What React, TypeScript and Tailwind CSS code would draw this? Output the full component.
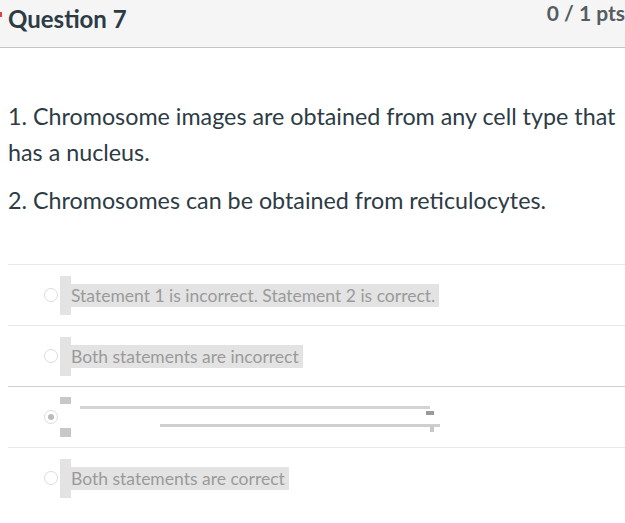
import React from 'react';

const ANSWERS = [
  { label: 'Statement 1 is incorrect. Statement 2 is correct.', hidden: false },
  { label: 'Both statements are incorrect', hidden: false },
  { label: '', hidden: true },
  { label: 'Both statements are correct', hidden: false },
];

function Radio({ checked }: { checked?: boolean }) {
  return (
    <span className="w-[14px] h-[14px] rounded-full border border-[#dcdcdc] bg-white shrink-0 flex items-center justify-center">
      {checked && <span className="w-[6px] h-[6px] rounded-full bg-[#bbbbbb]" />}
    </span>
  );
}

function HiddenRow() {
  // answer text scrubbed out in the screenshot
  return (
    <div className="flex items-center h-[60px] pl-[36px]">
      <Radio checked />
      <div className="relative ml-[2px] w-[374px] h-[40px]">
        <div className="absolute left-0 top-0 w-[11px] h-[7px] bg-[#c8c8c8]" />
        <div className="absolute left-0 bottom-0 w-[11px] h-[9px] bg-[#c8c8c8]" />
        <div className="absolute left-[20px] top-[9px] w-[350px] h-[3px] bg-[#d4d4d4]" />
        <div className="absolute left-[100px] top-[27px] w-[280px] h-[3px] bg-[#cfcfcf]" />
        <div className="absolute right-0 top-[14px] w-[8px] h-[4px] bg-[#9a9a9a]" />
        <div className="absolute right-0 bottom-[5px] w-[4px] h-[6px] bg-[#c8c8c8]" />
      </div>
    </div>
  );
}

export default function App() {
  return (
    <div
      className="w-[625px] h-[523px] bg-white overflow-hidden text-[#2d3b45]"
      style={{ fontFamily: 'Lato, "Noto Sans", sans-serif' }}
    >
      {/* Header */}
      <div className="relative flex justify-between items-start h-[48px] bg-[#f5f5f5] border-b border-[#c4c4c4]">
        <span className="absolute left-0 top-[12px] w-[2px] h-[5px] bg-[#e0413a]" />
        <h2 className="pl-[8px] pt-[4px] text-[24px] font-bold leading-[30px]">Question 7</h2>
        <div className="text-[21px] font-bold leading-[26px] text-[#555c62] whitespace-nowrap">0 / 1 pts</div>
      </div>

      {/* Question text */}
      <div className="px-[8px] pt-[50px] text-[23.3px] leading-[36px] text-[#2d3b45]">
        <p>1. Chromosome images are obtained from any cell type that has a nucleus.</p>
        <p className="mt-[12px]">2. Chromosomes can be obtained from reticulocytes.</p>
      </div>

      {/* Answers */}
      <div className="mt-[46px] ml-[8px]">
        {ANSWERS.map((a, i) => (
          <div
            key={i}
            className={`border-t ${i === 2 ? 'border-[#cfcfcf]' : 'border-[#e8e8e8]'}`}
          >
            {a.hidden ? (
              <HiddenRow />
            ) : (
              <div className="flex items-center h-[60px] pl-[36px]">
                <Radio />
                <div className="ml-[2px] flex items-center">
                  <span className="w-[11px] h-[39px] bg-[#e3e3e3]" />
                  <span className="bg-[#e3e3e3] pr-[4px] text-[17.5px] leading-[23px] text-[#9a9a9a] whitespace-nowrap">
                    {a.label}
                  </span>
                </div>
              </div>
            )}
          </div>
        ))}
      </div>
    </div>
  );
}
